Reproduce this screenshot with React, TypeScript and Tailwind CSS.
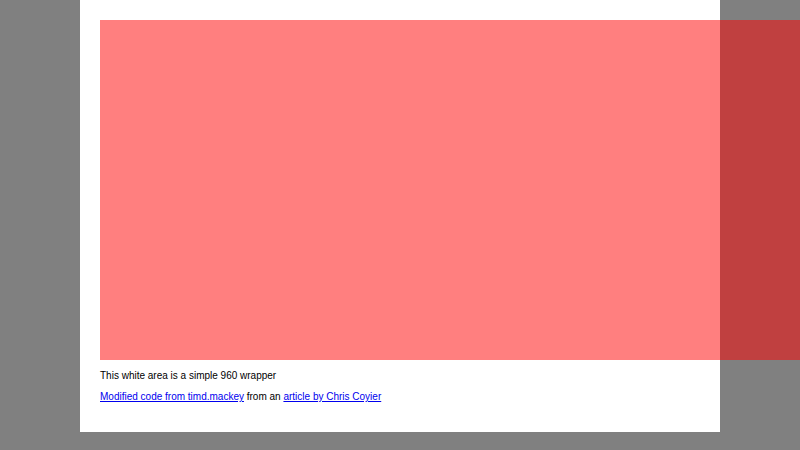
export default function App() {
  return (
    <div className="min-h-screen w-full overflow-hidden bg-[#808080] font-['Liberation_Sans',Arial,sans-serif]">
      <div className="ml-[80px] w-[640px] bg-white px-[20px] pt-[20px] pb-[29px]">
        <div className="h-[340px] w-[700px] bg-[rgba(255,0,0,0.5)]" />
        <p className="mt-[10px] text-[10px] leading-[12px] text-black">
          This white area is a simple 960 wrapper
        </p>
        <p className="mt-[9px] text-[10px] leading-[12px] text-black">
          <a href="#" className="text-[#0000ee] underline">
            Modified code from timd.mackey
          </a>{" "}
          from an{" "}
          <a href="#" className="text-[#0000ee] underline">
            article by Chris Coyier
          </a>
        </p>
      </div>
    </div>
  );
}
